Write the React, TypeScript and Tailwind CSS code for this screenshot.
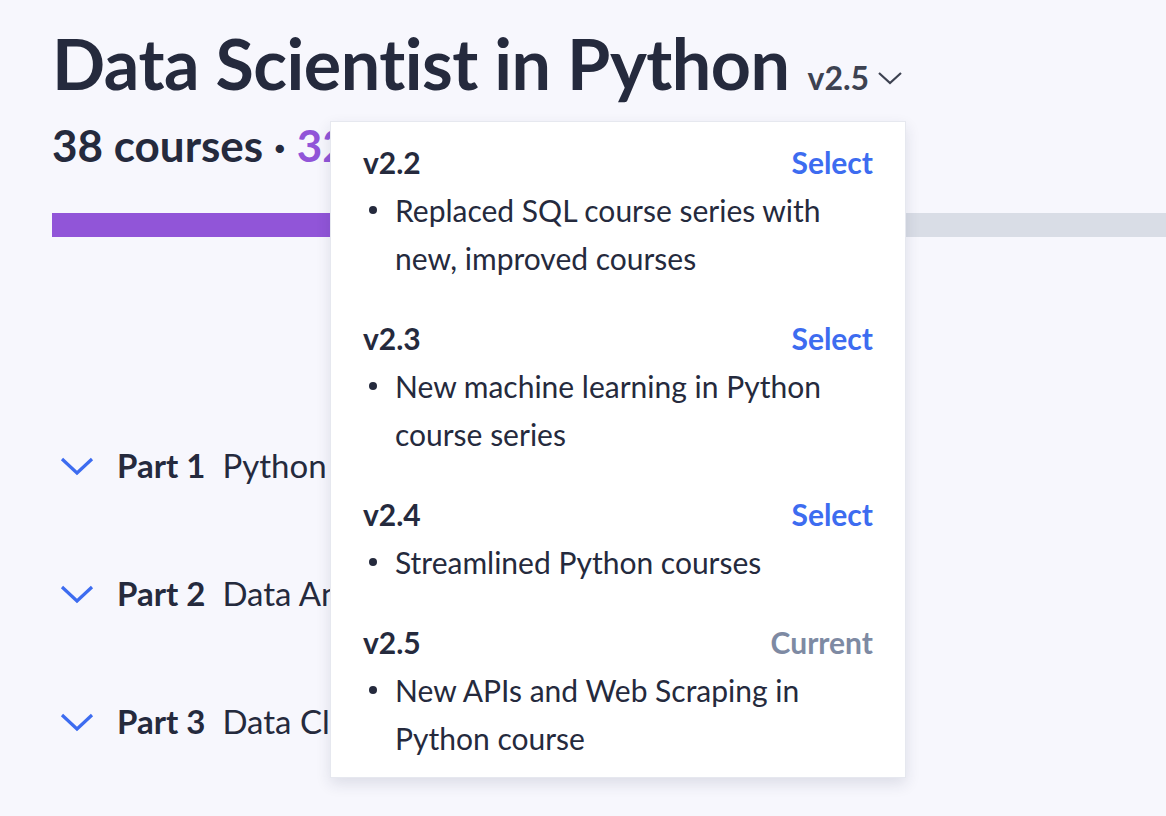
const versions = [
    { id: 'v2.2', notes: 'Replaced SQL course series with new, improved courses', current: false },
    { id: 'v2.3', notes: 'New machine learning in Python course series', current: false },
    { id: 'v2.4', notes: 'Streamlined Python courses', current: false },
    { id: 'v2.5', notes: 'New APIs and Web Scraping in Python course', current: true },
];

const parts = [
    { label: 'Part 1', title: 'Python Programming' },
    { label: 'Part 2', title: 'Data Analysis and Visualization' },
    { label: 'Part 3', title: 'Data Cleaning' },
];

export default function App() {
    return (
        <div className="relative min-h-[816px] overflow-hidden bg-[#f7f7fd] font-['Lato',sans-serif] text-[#252a3d]">
            <div className="pl-[52px] pt-[24px]">
                <div className="flex items-baseline gap-[18px]">
                    <h1 className="text-[70px] leading-[78px] font-bold tracking-[-0.5px]">
                        Data Scientist in Python
                    </h1>
                    <button className="flex items-center gap-[8px] text-[32px] font-bold text-[#3d4251]">
                        v2.5
                        <svg width="26" height="16" viewBox="0 0 26 16">
                            <path d="M2 3 L13 13 L24 3" fill="none" stroke="#3d4251" strokeWidth="2.2" />
                        </svg>
                    </button>
                </div>

                <p className="mt-[20px] text-[44px] leading-[46px] font-bold">
                    38 courses · <span className="text-[#9155d8]">32% complete</span>
                </p>

                <div className="mt-[45px] h-[24px] bg-[#d9dde6]">
                    <div className="h-full w-[420px] bg-[#9155d8]" />
                </div>

                <ul className="mt-[165px]">
                    {parts.map((p) => (
                        <li key={p.label} className="flex h-[128px] items-center">
                            <svg width="34" height="20" viewBox="0 0 34 20" className="ml-[8px] mr-[23px]">
                                <path d="M2 3 L17 17 L32 3" fill="none" stroke="#3d6cf0" strokeWidth="3.2" />
                            </svg>
                            <span className="text-[33px] font-bold">{p.label}</span>
                            <span className="ml-[17px] text-[33px]">{p.title}</span>
                        </li>
                    ))}
                </ul>
            </div>

            <div className="absolute left-[330px] top-[121px] w-[576px] border border-[#e6e8ef] bg-white px-[32px] pt-[16px] pb-[15px] shadow-[0_6px_14px_rgba(30,40,70,0.12)]">
                {versions.map((v) => (
                    <div key={v.id} className="mb-[32px] last:mb-0">
                        <div className="flex items-center justify-between text-[30px] leading-[48px] font-bold">
                            <span>{v.id}</span>
                            {v.current ? (
                                <span className="text-[#7e8aa3]">Current</span>
                            ) : (
                                <a className="text-[#3d6cf0]">Select</a>
                            )}
                        </div>
                        <div className="flex text-[30px] leading-[48px]">
                            <span className="ml-[6px] mt-[20px] h-[8px] w-[8px] shrink-0 rounded-full bg-[#252a3d]" />
                            <span className="ml-[18px] pr-[14px]">{v.notes}</span>
                        </div>
                    </div>
                ))}
            </div>
        </div>
    );
}
